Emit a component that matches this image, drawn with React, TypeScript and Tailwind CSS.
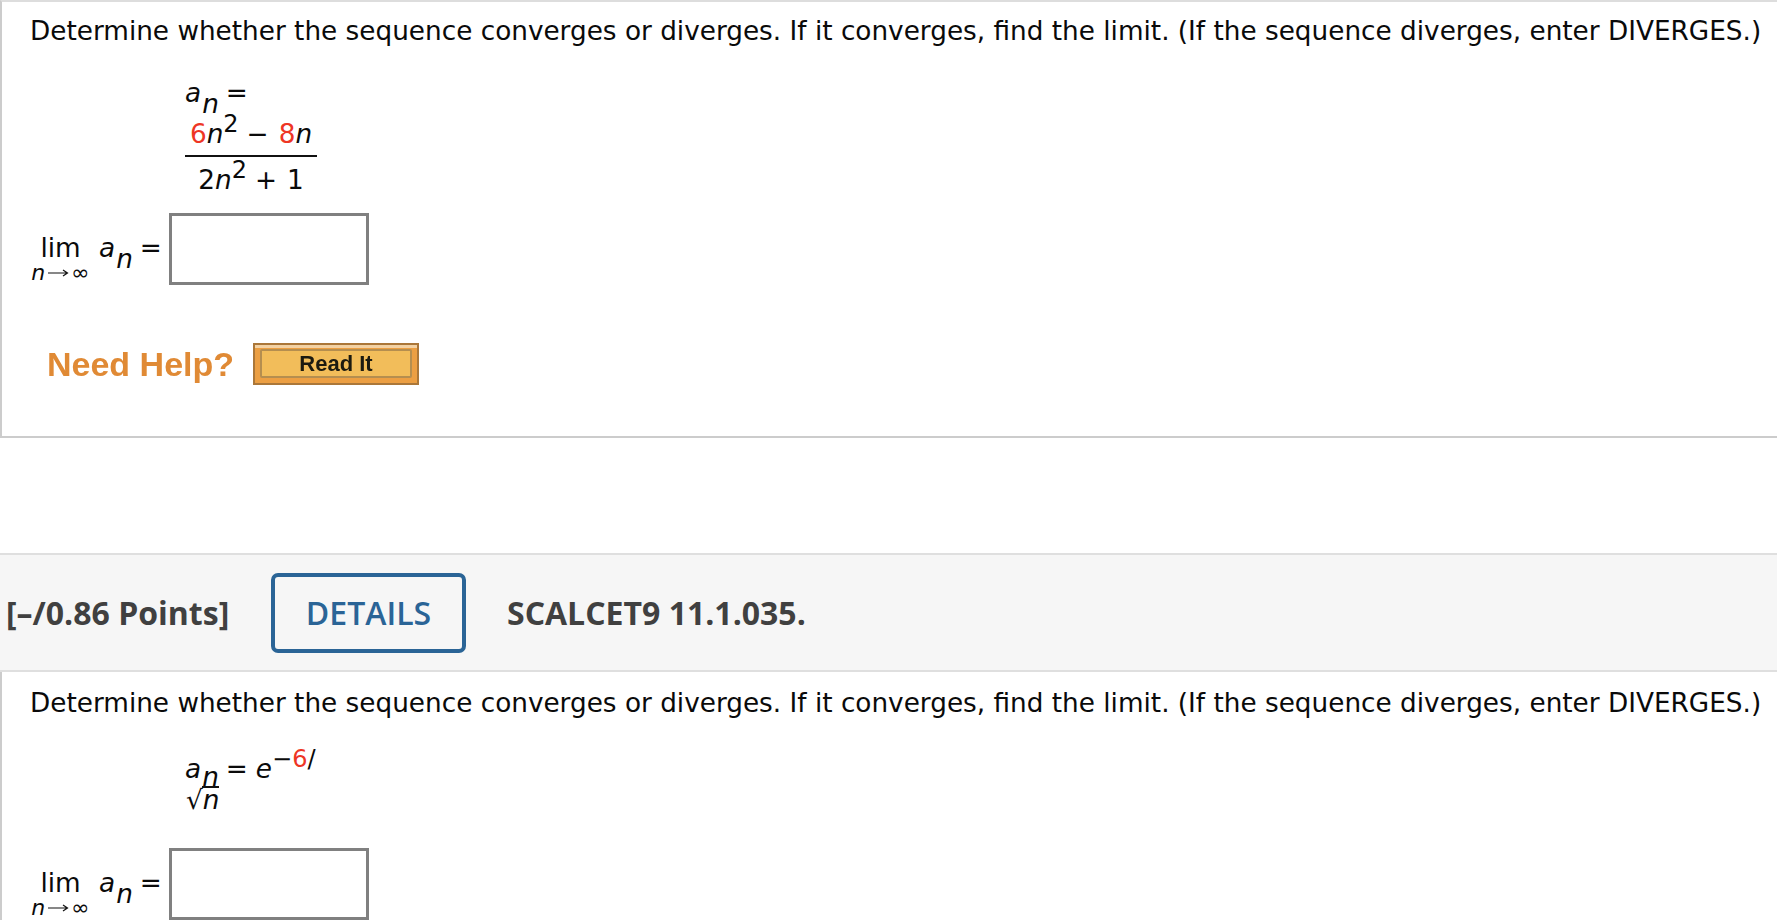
import React from 'react';

const mathFont = { fontFamily: '"DejaVu Sans", sans-serif' };

const Red = ({ children }: { children: React.ReactNode }) => (
    <span className="text-[#ee3524]">{children}</span>
);

const N = () => <i>n</i>;

const Sub = () => <i className="relative top-[11px] ml-[1px]">n</i>;

const Sup = () => <span className="relative top-[-11px] text-[24px]">2</span>;

const LimitRow = () => (
    <div className="flex items-start">
        <div className="w-[139px] flex items-start">
            <div className="w-[61px] flex flex-col items-center leading-none">
                <span className="leading-[30px] mt-[20px]">lim</span>
                <span className="flex items-center text-[22px] leading-[18px] mt-[1px] whitespace-nowrap">
                    <i>n</i>
                    <svg width="22" height="10" viewBox="0 0 22 10" className="mx-[2px] w-[22px]">
                        <path d="M1 5h19M16 2l4.500 3-4.500 3" fill="none" stroke="#111" strokeWidth="1.200" />
                    </svg>
                    <span>∞</span>
                </span>
            </div>
            <div className="ml-[8px] mt-[20px] leading-[30px] whitespace-nowrap">
                <i>a</i>
                <Sub />
                <span className="ml-[7px]">=</span>
            </div>
        </div>
        <div className="w-[200px] h-[72px] border-[3px] border-[#808080] bg-white" />
    </div>
);

export default function App() {
    return (
        <div className="w-[1777px] h-[920px] overflow-hidden bg-white text-[#0a0a0a] text-[26.3px]" style={mathFont}>
            <section className="h-[438px] border-t-2 border-l-2 border-b-2 border-t-[#dddddd] border-l-[#cccccc] border-b-[#cccccc] pl-[28px] pt-[13px]">
                <p className="leading-[32px] whitespace-nowrap">
                    Determine whether the sequence converges or diverges. If it converges, find the limit. (If the sequence diverges, enter DIVERGES.)
                </p>
                <div className="ml-[155px] mt-[31px] w-[132px]">
                    <div className="leading-[30px] whitespace-nowrap">
                        <i>a</i>
                        <Sub />
                        <span className="ml-[7px]">=</span>
                    </div>
                    <div className="flex flex-col items-center mt-[5px]">
                        <div className="h-[42px] leading-[42px] whitespace-nowrap">
                            <Red>6</Red><N /><Sup />
                            <span className="ml-[8px] mr-[10px]">−</span>
                            <Red>8</Red><N />
                        </div>
                        <div className="w-full h-[2px] bg-[#111]" />
                        <div className="h-[44px] leading-[46px] whitespace-nowrap">
                            2<N /><Sup />
                            <span className="ml-[8px] mr-[10px]">+</span>1
                        </div>
                    </div>
                </div>
                <div className="mt-[12px]">
                    <LimitRow />
                </div>
                <div className="flex items-center mt-[58px] ml-[17px]">
                    <span className="text-[34px] leading-[42px] font-bold text-[#e08a35] blur-[0.6px] w-[206px] whitespace-nowrap" style={{ fontFamily: '"Liberation Sans", sans-serif' }}>
                        Need Help?
                    </span>
                    <button className="w-[166px] h-[42px] border-2 border-[#ab7739] bg-[#ec9f43] shadow-[inset_0_3px_0_#f3d2a4] p-[5px] pt-[4px]">
                        <div className="h-full border-2 border-[#b58e4f] bg-[#f2bd5a] flex items-center justify-center rounded-[2px]">
                            <span className="text-[22px] font-bold text-[#1c1a10] whitespace-nowrap blur-[0.3px]" style={{ fontFamily: '"Liberation Sans", sans-serif' }}>Read It</span>
                        </div>
                    </button>
                </div>
            </section>

            <div className="h-[115px]" />

            <header className="h-[119px] bg-[#f6f6f6] border-t-2 border-b-2 border-[#dfdfdf] flex items-center pl-[6px] text-[#404040] font-bold text-[32px]" style={{ fontFamily: '"Open Sans", sans-serif' }}>
                <span className="w-[265px] whitespace-nowrap">[–/0.86 Points]</span>
                <button className="w-[195px] h-[80px] border-4 border-[#2a6496] rounded-[7px] text-[#2a6496] text-[32px] font-semibold">DETAILS</button>
                <span className="ml-[41px] whitespace-nowrap">SCALCET9 11.1.035.</span>
            </header>

            <section className="border-l-2 border-l-[#cccccc] pl-[28px] pt-[15px]">
                <p className="leading-[32px] whitespace-nowrap">
                    Determine whether the sequence converges or diverges. If it converges, find the limit. (If the sequence diverges, enter DIVERGES.)
                </p>
                <div className="ml-[155px] mt-[35px] leading-[30px] h-[74px] whitespace-nowrap relative">
                    <i>a</i>
                    <i className="relative top-[8px] ml-[1px] border-b-2 border-[#111] leading-[20px] inline-block h-[21px]">n</i>
                    <span className="ml-[7px]">=</span>
                    <i className="ml-[8px]">e</i>
                    <span className="relative top-[-11px] text-[24px]">−<Red>6</Red>/</span>
                    <div className="absolute left-[1px] top-[31px] leading-[30px]">√<i>n</i></div>
                </div>
                <div className="mt-[20px]">
                    <LimitRow />
                </div>
            </section>
        </div>
    );
}
